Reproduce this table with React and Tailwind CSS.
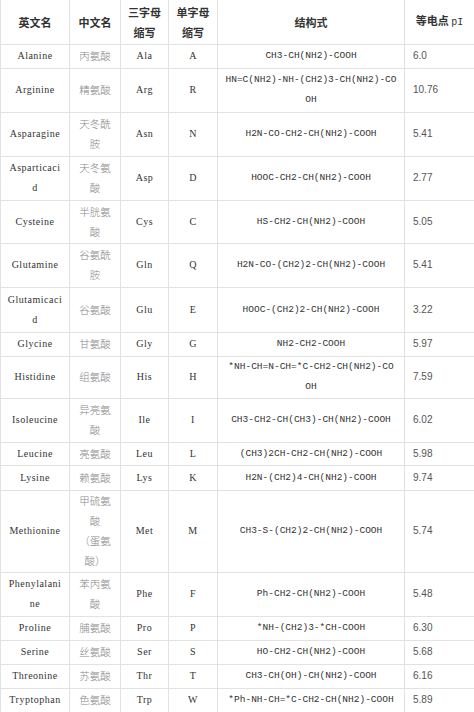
import React from 'react'

const ROWS = [
  { en: ['Alanine'], zh: ['丙氨酸'], ab3: 'Ala', ab1: 'A', f: ['CH3-CH(NH2)-COOH'], pi: '6.0', h: 'h-[24px]' },
  { en: ['Arginine'], zh: ['精氨酸'], ab3: 'Arg', ab1: 'R', f: ['HN=C(NH2)-NH-(CH2)3-CH(NH2)-CO', 'OH'], pi: '10.76', h: 'h-[44px]' },
  { en: ['Asparagine'], zh: ['天冬酰', '胺'], ab3: 'Asn', ab1: 'N', f: ['H2N-CO-CH2-CH(NH2)-COOH'], pi: '5.41', h: 'h-[44px]' },
  { en: ['Asparticaci', 'd'], zh: ['天冬氨', '酸'], ab3: 'Asp', ab1: 'D', f: ['HOOC-CH2-CH(NH2)-COOH'], pi: '2.77', h: 'h-[44px]' },
  { en: ['Cysteine'], zh: ['半胱氨', '酸'], ab3: 'Cys', ab1: 'C', f: ['HS-CH2-CH(NH2)-COOH'], pi: '5.05', h: 'h-[43px]' },
  { en: ['Glutamine'], zh: ['谷氨酰', '胺'], ab3: 'Gln', ab1: 'Q', f: ['H2N-CO-(CH2)2-CH(NH2)-COOH'], pi: '5.41', h: 'h-[44px]' },
  { en: ['Glutamicaci', 'd'], zh: ['谷氨酸'], ab3: 'Glu', ab1: 'E', f: ['HOOC-(CH2)2-CH(NH2)-COOH'], pi: '3.22', h: 'h-[45px]' },
  { en: ['Glycine'], zh: ['甘氨酸'], ab3: 'Gly', ab1: 'G', f: ['NH2-CH2-COOH'], pi: '5.97', h: 'h-[24px]' },
  { en: ['Histidine'], zh: ['组氨酸'], ab3: 'His', ab1: 'H', f: ['*NH-CH=N-CH=*C-CH2-CH(NH2)-CO', 'OH'], pi: '7.59', h: 'h-[42px]' },
  { en: ['Isoleucine'], zh: ['异亮氨', '酸'], ab3: 'Ile', ab1: 'I', f: ['CH3-CH2-CH(CH3)-CH(NH2)-COOH'], pi: '6.02', h: 'h-[44px]' },
  { en: ['Leucine'], zh: ['亮氨酸'], ab3: 'Leu', ab1: 'L', f: ['(CH3)2CH-CH2-CH(NH2)-COOH'], pi: '5.98', h: 'h-[23px]' },
  { en: ['Lysine'], zh: ['赖氨酸'], ab3: 'Lys', ab1: 'K', f: ['H2N-(CH2)4-CH(NH2)-COOH'], pi: '9.74', h: 'h-[25px]' },
  { en: ['Methionine'], zh: ['甲硫氨', '酸', '（蛋氨', '酸）'], ab3: 'Met', ab1: 'M', f: ['CH3-S-(CH2)2-CH(NH2)-COOH'], pi: '5.74', h: 'h-[82px]' },
  { en: ['Phenylalani', 'ne'], zh: ['苯丙氨', '酸'], ab3: 'Phe', ab1: 'F', f: ['Ph-CH2-CH(NH2)-COOH'], pi: '5.48', h: 'h-[44px]' },
  { en: ['Proline'], zh: ['脯氨酸'], ab3: 'Pro', ab1: 'P', f: ['*NH-(CH2)3-*CH-COOH'], pi: '6.30', h: 'h-[24px]' },
  { en: ['Serine'], zh: ['丝氨酸'], ab3: 'Ser', ab1: 'S', f: ['HO-CH2-CH(NH2)-COOH'], pi: '5.68', h: 'h-[24px]' },
  { en: ['Threonine'], zh: ['苏氨酸'], ab3: 'Thr', ab1: 'T', f: ['CH3-CH(OH)-CH(NH2)-COOH'], pi: '6.16', h: 'h-[24px]' },
  { en: ['Tryptophan'], zh: ['色氨酸'], ab3: 'Trp', ab1: 'W', f: ['*Ph-NH-CH=*C-CH2-CH(NH2)-COOH'], pi: '5.89', h: 'h-[24px]' },
]

const lat = "font-['Liberation_Serif','Noto_Sans_CJK_SC',serif] text-[10px] tracking-[0.5px] text-[#333]"
const cjk = "font-['Noto_Sans_CJK_SC',sans-serif] text-[10.5px] text-[#888] font-light"
const mono = "font-['Liberation_Mono',monospace] text-[9.5px] text-[#333]"
const cell = 'border border-[#e2e2e2] text-center align-middle p-0 leading-[20px]'

function Lines({ items }) {
  return items.map((t, i) => <div key={i}>{t}</div>)
}

export default function App() {
  return (
    <div className="w-[474px] h-[712px] overflow-hidden bg-white">
      <table className="w-[474px] table-fixed border-collapse">
        <colgroup>
          <col className="w-[69px]" />
          <col className="w-[51px]" />
          <col className="w-[48px]" />
          <col className="w-[49px]" />
          <col className="w-[187px]" />
          <col className="w-[70px]" />
        </colgroup>
        <thead>
          <tr className="h-[44px]">
            {[['英文名'], ['中文名'], ['三字母', '缩写'], ['单字母', '缩写'], ['结构式']].map((t, i) => (
              <th key={i} className={`${cell} border-t-0 font-['Noto_Sans_CJK_SC',sans-serif] text-[11px] font-bold text-[#333]`}>
                <Lines items={t} />
              </th>
            ))}
            <th className={`${cell} border-t-0 font-['Noto_Sans_CJK_SC',sans-serif] text-[11px] font-bold text-[#333]`}>
              等电点 <span className="font-['Liberation_Mono',monospace] font-normal text-[10px]">pI</span>
            </th>
          </tr>
        </thead>
        <tbody>
          {ROWS.map((r) => (
            <tr key={r.ab3} className={r.h}>
              <td className={`${cell} ${lat}`}><Lines items={r.en} /></td>
              <td className={`${cell} ${cjk}`}><Lines items={r.zh} /></td>
              <td className={`${cell} ${lat}`}>{r.ab3}</td>
              <td className={`${cell} ${lat}`}>{r.ab1}</td>
              <td className={`${cell} ${mono}`}><Lines items={r.f} /></td>
              <td className={`${cell} !text-left pl-[8px] font-['Liberation_Sans',sans-serif] text-[10px] text-[#555]`}>{r.pi}</td>
            </tr>
          ))}
        </tbody>
      </table>
    </div>
  )
}
